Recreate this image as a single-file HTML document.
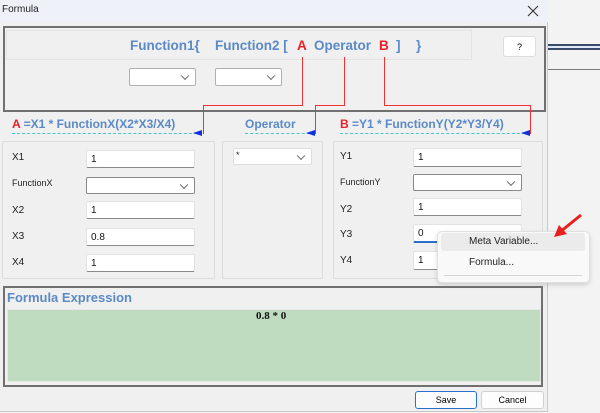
<!DOCTYPE html>
<html><head><style>
*{margin:0;padding:0;box-sizing:border-box}
body{width:600px;height:413px;overflow:hidden;background:#f3f3f3;font-family:"Liberation Sans",sans-serif;position:relative}
.a{position:absolute}
.dlg{left:0;top:0;width:548px;height:412px;background:#f0f0f0;border-right:1px solid #c8c8c8;border-bottom:1px solid #c8c8c8}
.t{font-size:10px;color:#222;white-space:nowrap}
.in{background:#fff;border:1px solid #e2e2e2;border-bottom:1px solid #8a8a8a;border-radius:2px;font-size:10px;padding:3px 0 0 4px;color:#111}
.cb{background:#fff;border:1px solid #b0b0b0;border-radius:2px}
.cb::after{content:"";position:absolute;right:7px;top:50%;width:5px;height:5px;border-right:1px solid #666;border-bottom:1px solid #666;transform:translateY(-70%) rotate(45deg)}
.h{font-size:13.5px;font-weight:bold;color:#5b8ac6;white-space:nowrap}
.r{color:#e8202a}
.ln{background:#ee3333}
.panel{border:1px solid #dcdcdc;border-radius:2px}
.dash{height:0;border-top:1px dashed #44c8c8}
.arr{width:0;height:0;border-top:3px solid transparent;border-bottom:3px solid transparent;border-right:9px solid #1030e0}
</style></head><body>
<div class="a" style="left:548px;top:44px;width:52px;height:2px;background:#3a4a68"></div>
<div class="a" style="left:548px;top:48px;width:52px;height:2px;background:#3a4a68"></div>
<div class="a" style="left:548px;top:46px;width:52px;height:2px;background:#dfe8f5"></div>
<div class="a" style="left:548px;top:69px;width:52px;height:1px;background:#7a7a7a"></div>
<div class="a dlg"></div>
<div class="a" style="left:0;top:0;width:548px;height:22px;background:#eef1f7"></div>
<div class="a t" style="left:2px;top:4px;font-size:10px">Formula</div>
<svg class="a" style="left:527px;top:5px" width="12" height="12"><path d="M1 1L11 11M11 1L1 11" stroke="#333" stroke-width="1.1"/></svg>

<div class="a" style="left:3px;top:26px;width:543px;height:86px;border:2px solid #707070"></div>
<div class="a" style="left:6px;top:30px;width:466px;height:30px;border:1px solid #e4e4e4"></div>
<div class="a h" style="left:130px;top:38px">Function1{</div>
<div class="a h" style="left:215px;top:38px">Function2 [</div>
<div class="a h r" style="left:297px;top:38px">A</div>
<div class="a h" style="left:314px;top:38px">Operator</div>
<div class="a h r" style="left:379px;top:38px">B</div>
<div class="a h" style="left:396px;top:38px">]</div>
<div class="a h" style="left:416px;top:38px">}</div>
<div class="a" style="left:503px;top:36px;width:33px;height:21px;background:#fff;border:1px solid #ddd;border-radius:3px;font-size:9px;text-align:center;line-height:20px">?</div>
<div class="a cb" style="left:129px;top:68px;width:67px;height:18px"></div>
<div class="a cb" style="left:215px;top:68px;width:67px;height:18px"></div>

<div class="a ln" style="left:302px;top:57px;width:1px;height:49px"></div>
<div class="a ln" style="left:203px;top:105px;width:100px;height:1px"></div>
<div class="a ln" style="left:203px;top:105px;width:1px;height:29px"></div>
<div class="a ln" style="left:344px;top:57px;width:1px;height:49px"></div>
<div class="a ln" style="left:315px;top:105px;width:30px;height:1px"></div>
<div class="a ln" style="left:315px;top:105px;width:1px;height:29px"></div>
<div class="a ln" style="left:384px;top:57px;width:1px;height:49px"></div>
<div class="a ln" style="left:384px;top:105px;width:147px;height:1px"></div>
<div class="a ln" style="left:530px;top:105px;width:1px;height:29px"></div>

<div class="a h" style="left:12px;top:117px;font-size:12px"><span class="r">A</span> =X1 * FunctionX(X2*X3/X4)</div>
<div class="a h" style="left:245px;top:117px;font-size:12px">Operator</div>
<div class="a h" style="left:340px;top:117px;font-size:12px"><span class="r">B</span> =Y1 * FunctionY(Y2*Y3/Y4)</div>
<div class="a dash" style="left:12px;top:133px;width:185px"></div>
<div class="a dash" style="left:245px;top:133px;width:65px"></div>
<div class="a dash" style="left:340px;top:133px;width:185px"></div>
<div class="a arr" style="left:193px;top:130px"></div>
<div class="a arr" style="left:306px;top:130px"></div>
<div class="a arr" style="left:521px;top:130px"></div>

<div class="a panel" style="left:2px;top:141px;width:213px;height:138px"></div>
<div class="a panel" style="left:222px;top:141px;width:101px;height:138px"></div>
<div class="a panel" style="left:333px;top:141px;width:210px;height:138px"></div>

<div class="a t" style="left:12px;top:152px">X1</div>
<div class="a in" style="left:86px;top:150px;width:109px;height:18px">1</div>
<div class="a t" style="left:12px;top:178px;font-size:9px">FunctionX</div>
<div class="a cb" style="left:86px;top:177px;width:109px;height:17px;border-color:#888"></div>
<div class="a t" style="left:12px;top:205px">X2</div>
<div class="a in" style="left:86px;top:201px;width:109px;height:18px">1</div>
<div class="a t" style="left:12px;top:231px">X3</div>
<div class="a in" style="left:86px;top:228px;width:109px;height:18px">0.8</div>
<div class="a t" style="left:12px;top:257px">X4</div>
<div class="a in" style="left:86px;top:254px;width:109px;height:18px">1</div>

<div class="a cb" style="left:233px;top:148px;width:79px;height:17px;border-color:#ddd"></div>
<div class="a t" style="left:236px;top:150px;font-size:9px">*</div>

<div class="a t" style="left:340px;top:151px">Y1</div>
<div class="a in" style="left:413px;top:148px;width:109px;height:19px">1</div>
<div class="a t" style="left:340px;top:177px;font-size:9px">FunctionY</div>
<div class="a cb" style="left:413px;top:174px;width:109px;height:17px;border-color:#888"></div>
<div class="a t" style="left:340px;top:204px">Y2</div>
<div class="a in" style="left:413px;top:198px;width:109px;height:18px">1</div>
<div class="a t" style="left:340px;top:229px">Y3</div>
<div class="a in" style="left:413px;top:224px;width:109px;height:19px;border-bottom:2px solid #2a6fc9">0</div>
<div class="a t" style="left:340px;top:255px">Y4</div>
<div class="a in" style="left:413px;top:251px;width:109px;height:19px">1</div>

<div class="a" style="left:437px;top:231px;width:153px;height:52px;background:#f9f9f9;border:1px solid #e0e0e0;border-radius:5px;box-shadow:0 2px 5px rgba(0,0,0,.15)"></div>
<div class="a" style="left:441px;top:233px;width:144px;height:18px;background:#ebebeb;border-radius:3px"></div>
<div class="a t" style="left:469px;top:236px">Meta Variable...</div>
<div class="a t" style="left:469px;top:257px">Formula...</div>
<div class="a" style="left:444px;top:275px;width:138px;height:1px;background:#d5d5d5"></div>
<svg class="a" style="left:550px;top:210px" width="40" height="32"><line x1="31" y1="5" x2="10" y2="22" stroke="#e82020" stroke-width="3"/><polygon points="4,27 9,15 17,24" fill="#e82020"/></svg>

<div class="a" style="left:3px;top:286px;width:540px;height:101px;border:2px solid #707070"></div>
<div class="a h" style="left:7px;top:290px;font-size:13px">Formula Expression</div>
<div class="a" style="left:7px;top:309px;width:534px;height:73px;background:#c0dcc0;border:1px solid #e8e8e8"></div>
<div class="a" style="left:256px;top:310px;font-family:'Liberation Serif',serif;font-weight:bold;font-size:11px;color:#111">0.8 * 0</div>

<div class="a" style="left:415px;top:391px;width:62px;height:18px;background:#fdfdfd;border:1px solid #2a6fc9;border-radius:3px;font-size:9px;text-align:center;line-height:16px">Save</div>
<div class="a" style="left:481px;top:391px;width:63px;height:18px;background:#fdfdfd;border:1px solid #d0d0d0;border-radius:3px;font-size:9px;text-align:center;line-height:16px">Cancel</div>
</body></html>
